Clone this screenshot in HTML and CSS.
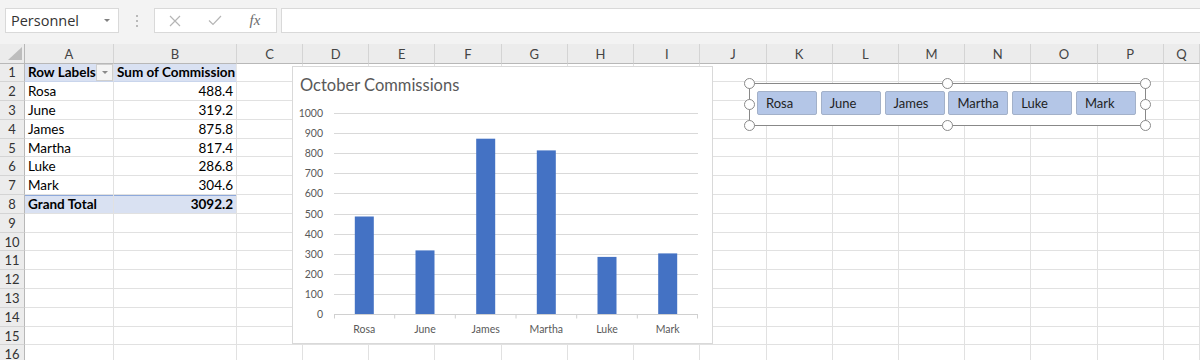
FILE: index.html
```html
<!DOCTYPE html>
<html lang="en">
<head>
    <meta charset="UTF-8">
    <meta name="viewport" content="width=device-width, initial-scale=1.0">
    <title>Personnel - October Commissions</title>
    <link rel="stylesheet" href="styles.css">
</head>
<body>
    <div class="toolbar">
        <div class="name-box">
            <span>Personnel</span>
            <span class="caret"></span>
        </div>
        <div class="grip"><i></i><i></i><i></i></div>
        <div class="func-box">
            <span class="func-btn">
                <svg width="12" height="12" viewBox="0 0 12 12"><path d="M1 1L11 11M11 1L1 11" stroke="#b5b5b5" stroke-width="1.2" fill="none"/></svg>
            </span>
            <span class="func-btn">
                <svg width="14" height="11" viewBox="0 0 14 11"><path d="M1 5.5L5 9.5L13 1" stroke="#b5b5b5" stroke-width="1.2" fill="none"/></svg>
            </span>
            <span class="func-btn fx">fx</span>
        </div>
        <div class="formula"></div>
    </div>

    <div class="sheet" id="sheet"></div>

    <!-- pivot chart -->
    <div class="chart">
        <svg width="419" height="276" viewBox="0 0 419 276">
            <text class="chart-title" x="7" y="24">October Commissions</text>
            <g class="gridlines">
                <line x1="41" x2="405" y1="46.5" y2="46.5"/>
                <line x1="41" x2="405" y1="66.5" y2="66.5"/>
                <line x1="41" x2="405" y1="86.5" y2="86.5"/>
                <line x1="41" x2="405" y1="106.5" y2="106.5"/>
                <line x1="41" x2="405" y1="126.5" y2="126.5"/>
                <line x1="41" x2="405" y1="147.5" y2="147.5"/>
                <line x1="41" x2="405" y1="167.5" y2="167.5"/>
                <line x1="41" x2="405" y1="187.5" y2="187.5"/>
                <line x1="41" x2="405" y1="207.5" y2="207.5"/>
                <line x1="41" x2="405" y1="227.5" y2="227.5"/>
            </g>
            <g class="value-labels" text-anchor="end">
                <text x="30" y="50">1000</text>
                <text x="30" y="70">900</text>
                <text x="30" y="90">800</text>
                <text x="30" y="110">700</text>
                <text x="30" y="130">600</text>
                <text x="30" y="151">500</text>
                <text x="30" y="171">400</text>
                <text x="30" y="191">300</text>
                <text x="30" y="211">200</text>
                <text x="30" y="231">100</text>
                <text x="30" y="251">0</text>
            </g>
            <g class="bars">
                <rect x="61.8" y="149.5" width="19" height="98"/>
                <rect x="122.5" y="183.4" width="19" height="64.1"/>
                <rect x="183.2" y="71.7" width="19" height="175.8"/>
                <rect x="243.8" y="83.4" width="19" height="164.1"/>
                <rect x="304.5" y="189.9" width="19" height="57.6"/>
                <rect x="365.2" y="186.4" width="19" height="61.1"/>
            </g>
            <path class="axis" d="M41 247.5H405M41.5 247.5v4M101.7 247.5v4M162.3 247.5v4M223 247.5v4M283.7 247.5v4M344.3 247.5v4M404.5 247.5v4"/>
            <g class="category-labels" text-anchor="middle">
                <text x="71.3" y="266">Rosa</text>
                <text x="132" y="266">June</text>
                <text x="192.7" y="266">James</text>
                <text x="253.3" y="266">Martha</text>
                <text x="314" y="266">Luke</text>
                <text x="374.7" y="266">Mark</text>
            </g>
        </svg>
    </div>

    <!-- slicer, selected -->
    <div class="slicer">
        <div class="slicer-items">
            <span class="slicer-item">Rosa</span>
            <span class="slicer-item">June</span>
            <span class="slicer-item">James</span>
            <span class="slicer-item">Martha</span>
            <span class="slicer-item">Luke</span>
            <span class="slicer-item">Mark</span>
        </div>
        <span class="handle tl"></span>
        <span class="handle tm"></span>
        <span class="handle tr"></span>
        <span class="handle ml"></span>
        <span class="handle mr"></span>
        <span class="handle bl"></span>
        <span class="handle bm"></span>
        <span class="handle br"></span>
    </div>

    <script>
        const columns = ['A', 'B', 'C', 'D', 'E', 'F', 'G', 'H', 'I', 'J', 'K', 'L', 'M', 'N', 'O', 'P', 'Q'];
        const pivot = [
            ['Row Labels', 'Sum of Commission'],
            ['Rosa', '488.4'],
            ['June', '319.2'],
            ['James', '875.8'],
            ['Martha', '817.4'],
            ['Luke', '286.8'],
            ['Mark', '304.6'],
            ['Grand Total', '3092.2']
        ];
        const sheet = document.getElementById('sheet');

        function addCell(cls, text) {
            const el = document.createElement('div');
            el.className = cls;
            if (text !== undefined) el.textContent = text;
            sheet.appendChild(el);
            return el;
        }

        addCell('corner');
        columns.forEach(c => addCell('col-head', c));

        for (let r = 1; r <= 16; r++) {
            addCell('row-head', r);
            const row = pivot[r - 1];
            columns.forEach((c, i) => {
                let cls = 'cell';
                let text;
                if (row && i < 2) {
                    text = row[i];
                    if (i === 1 && r > 1) cls += ' num';
                    if (r === 1) cls += ' pivot-head';
                    if (r === pivot.length) cls += ' pivot-total';
                }
                const el = addCell(cls, text);
                // filter dropdown on Row Labels
                if (r === 1 && i === 0) {
                    const btn = document.createElement('span');
                    btn.className = 'filter-btn';
                    el.appendChild(btn);
                }
            });
        }
    </script>
</body>
</html>
```

FILE: styles.css
```css
* {
    margin: 0;
    padding: 0;
    box-sizing: border-box;
}

body {
    font-family: Lato, 'Liberation Sans', sans-serif;
    background: #fff;
    width: 1200px;
    height: 360px;
    overflow: hidden;
    position: relative;
}

/* formula bar */
.toolbar {
    display: flex;
    align-items: flex-start;
    height: 44px;
    padding: 8px 0 0 5px;
    background: #f3f3f3;
}

.name-box {
    width: 114px;
    height: 25px;
    background: #fff;
    border: 1px solid #d9d9d9;
    display: flex;
    align-items: center;
    justify-content: space-between;
    padding: 0 8px 0 5px;
    font-family: 'Open Sans', sans-serif;
    font-size: 14.5px;
    color: #333;
}

.caret {
    border-left: 3px solid transparent;
    border-right: 3px solid transparent;
    border-top: 3px solid #808080;
}

.grip {
    width: 35px;
    height: 25px;
    display: flex;
    flex-direction: column;
    align-items: center;
    justify-content: center;
    gap: 3px;
}

.grip i {
    width: 2px;
    height: 2px;
    border-radius: 50%;
    background: #a6a6a6;
}

.func-box {
    width: 123px;
    height: 25px;
    background: #fff;
    border: 1px solid #d9d9d9;
    display: flex;
    align-items: center;
}

.func-btn {
    width: 40px;
    display: flex;
    justify-content: center;
    align-items: center;
}

.func-btn svg {
    display: block;
}

.fx {
    font-family: 'Liberation Serif', serif;
    font-style: italic;
    font-size: 15px;
    color: #6b6b6b;
}

.formula {
    flex: 1;
    height: 25px;
    margin-left: 4px;
    background: #fff;
    border: 1px solid #d9d9d9;
    border-right: none;
}

/* grid */
.sheet {
    display: grid;
    grid-template-columns: 25px 89px 123px 66px repeat(13, 66.23px) 1fr;
    grid-template-rows: 19.5px repeat(16, 18.8px);
}

.corner,
.col-head,
.row-head {
    background: #ececec;
    color: #444;
    font-size: 13px;
    display: flex;
    align-items: center;
    justify-content: center;
}

.corner {
    position: relative;
    border-right: 1px solid #b8b8b8;
    border-bottom: 1px solid #b8b8b8;
}

.corner::after {
    content: '';
    position: absolute;
    right: 2px;
    bottom: 3px;
    border-left: 14px solid transparent;
    border-bottom: 13px solid #bdbdbd;
}

.col-head {
    border-right: 1px solid #d4d4d4;
    border-bottom: 1px solid #b8b8b8;
    padding-top: 2px;
}

.row-head {
    border-right: 1px solid #b8b8b8;
    border-bottom: 1px solid #d4d4d4;
    color: #333;
}

.cell {
    display: flex;
    align-items: center;
    padding: 0 3px;
    border-right: 1px solid #e1e1e1;
    border-bottom: 1px solid #e1e1e1;
    font-size: 13.5px;
    color: #000;
    white-space: nowrap;
    overflow: hidden;
}

.cell.num {
    justify-content: flex-end;
}

.pivot-head {
    background: #d9e1f2;
    font-weight: 700;
    border-bottom-color: #c9d5ec;
}

.pivot-head:first-child,
.pivot-head + .pivot-head {
    border-right-color: #e6e6e6;
}

.pivot-total {
    background: #d9e1f2;
    font-weight: 700;
    box-shadow: inset 0 1px 0 #8ea9db;
}

.filter-btn {
    margin-left: auto;
    margin-right: -3px;
    width: 17px;
    height: 17px;
    background: #f4f4f4;
    border: 1px solid #cfcfcf;
    display: flex;
    align-items: center;
    justify-content: center;
}

.filter-btn::after {
    content: '';
    border-left: 3px solid transparent;
    border-right: 3px solid transparent;
    border-top: 3px solid #8a8a8a;
}

/* chart */
.chart {
    position: absolute;
    left: 292px;
    top: 66px;
    width: 421px;
    height: 278px;
    background: #fff;
    border: 1px solid #d9d9d9;
}

.chart svg {
    display: block;
    font-family: Lato, 'Liberation Sans', sans-serif;
}

.chart-title {
    font-size: 16.5px;
    fill: #595959;
}

.gridlines line {
    stroke: #d9d9d9;
    stroke-width: 1;
}

.value-labels text,
.category-labels text {
    font-size: 10.5px;
    fill: #595959;
}

.bars rect {
    fill: #4472c4;
}

.axis {
    stroke: #d0d0d0;
    stroke-width: 1;
    fill: none;
}

/* slicer */
.slicer {
    position: absolute;
    left: 749px;
    top: 83px;
    width: 397px;
    height: 43px;
    background: #fff;
    border: 1px solid #888;
}

.slicer-items {
    display: flex;
    gap: 3.8px;
    padding: 7px 0 0 7px;
}

.slicer-item {
    width: 60px;
    height: 24px;
    background: #b4c6e7;
    border: 1px solid #a3b1c9;
    border-radius: 2px;
    padding-left: 8px;
    display: flex;
    align-items: center;
    font-size: 13px;
    color: #1f1f1f;
}

.handle {
    position: absolute;
    width: 11px;
    height: 11px;
    border-radius: 50%;
    background: #fff;
    border: 1.5px solid #8a8a8a;
}

.handle.tl { left: -6px; top: -6px; }
.handle.tm { left: calc(50% - 5.5px); top: -6px; }
.handle.tr { right: -6px; top: -6px; }
.handle.ml { left: -6px; top: calc(50% - 5.5px); }
.handle.mr { right: -6px; top: calc(50% - 5.5px); }
.handle.bl { left: -6px; bottom: -6px; }
.handle.bm { left: calc(50% - 5.5px); bottom: -6px; }
.handle.br { right: -6px; bottom: -6px; }
```
